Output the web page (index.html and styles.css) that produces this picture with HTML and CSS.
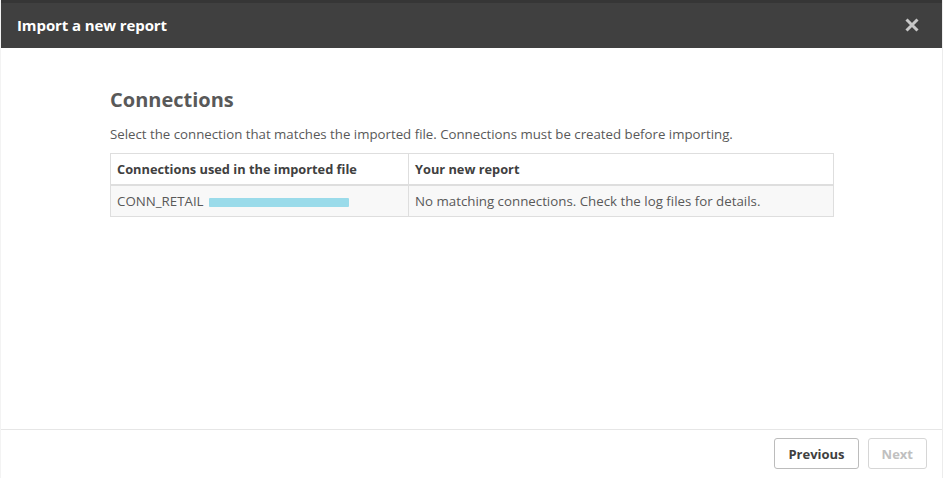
FILE: index.html
```html
<!DOCTYPE html>
<html>
<head>
<meta charset="utf-8">
<link rel="stylesheet" href="styles.css">
</head>
<body>
<div class="dialog">
  <div class="header">
    <div class="title">Import a new report</div>
    <div class="close" aria-label="Close">
      <svg width="14" height="14" viewBox="0 0 14 14"><path d="M1.5 1.5 L12.5 12.5 M12.5 1.5 L1.5 12.5" stroke="#c8c8c8" stroke-width="3" stroke-linecap="butt"/></svg>
    </div>
  </div>
  <div class="body">
    <h1 class="heading">Connections</h1>
    <p class="desc">Select the connection that matches the imported file. Connections must be created before importing.</p>
    <table class="conn">
      <thead>
        <tr><th class="c1">Connections used in the imported file</th><th class="c2">Your new report</th></tr>
      </thead>
      <tbody>
        <tr><td class="c1">CONN_RETAIL<span class="redact"></span></td><td class="c2">No matching connections. Check the log files for details.</td></tr>
      </tbody>
    </table>
  </div>
  <div class="footer">
    <button class="btn">Previous</button>
    <button class="btn disabled">Next</button>
  </div>
</div>
</body>
</html>
```
FILE: styles.css
```css
html, body {
  margin: 0;
  padding: 0;
  height: 100%;
  background: #fff;
}
body {
  font-family: "Open Sans", "Liberation Sans", sans-serif;
  color: #595959;
}
.dialog {
  height: 478px;
  display: flex;
  flex-direction: column;
  border-right: 1px solid #ececec;
  border-left: 1px solid #f3f3f3;
  box-sizing: border-box;
}
.header {
  height: 48px;
  background: #404040;
  border-top: 3px solid #363636;
  box-sizing: border-box;
  display: flex;
  align-items: center;
  justify-content: space-between;
  padding: 0 22px 0 16px;
}
.title {
  color: #fff;
  font-weight: 700;
  font-size: 15px;
  letter-spacing: -0.1px;
  margin-top: -2px;
}
.close {
  width: 16px;
  height: 16px;
  display: flex;
  align-items: center;
  justify-content: center;
  margin-top: -2px;
}
.body {
  flex: 1;
  padding: 39px 108px 0 109px;
}
.heading {
  margin: 0 0 12px 0;
  font-size: 20px;
  font-weight: 700;
  color: #595959;
  line-height: 26px;
}
.desc {
  margin: 0 0 10px 0;
  font-size: 13.25px;
  line-height: 18px;
  color: #595959;
}
.conn {
  width: 100%;
  border-collapse: collapse;
  font-size: 13.3px;
}
.conn th, .conn td {
  border: 1px solid #dedede;
  text-align: left;
  padding: 0 6px;
  height: 30px;
}
.conn th {
  font-weight: 700;
  font-size: 12.8px;
  color: #404040;
  border-bottom: 2px solid #dedede;
}
.conn td {
  background: #f8f8f8;
  color: #595959;
}
.c1 { width: 285px; }
.redact {
  display: inline-block;
  width: 140px;
  height: 9px;
  margin-left: 5px;
  background: #9adbea;
  vertical-align: -1px;
  border-radius: 1px;
}
.footer {
  height: 49px;
  border-top: 1px solid #e6e6e6;
  display: flex;
  justify-content: flex-end;
  align-items: flex-start;
  gap: 9px;
  padding: 8px 15px 0 0;
  box-sizing: border-box;
}
.btn {
  font-family: "Open Sans", "Liberation Sans", sans-serif;
  font-size: 13px;
  font-weight: 700;
  height: 31px;
  padding: 0 13px;
  background: #fff;
  border: 1px solid #bcbcbc;
  border-radius: 3px;
  color: #404040;
}
.btn.disabled {
  color: #c0c0c0;
  border-color: #d6d6d6;
}
```
